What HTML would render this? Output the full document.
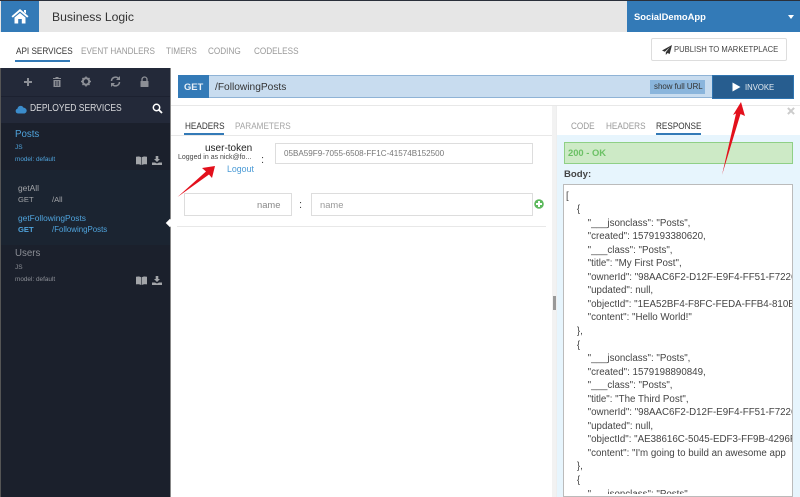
<!DOCTYPE html>
<html><head><meta charset="utf-8"><style>
html,body{margin:0;padding:0;background:#fff}
#r{position:relative;width:800px;height:497px;overflow:hidden;background:#fff;font-family:"Liberation Sans",sans-serif;color:#444}
#r div,#r svg,#r span.a{position:absolute}
.t{white-space:nowrap;line-height:14px}
.n{font-size:9.2px;transform:scaleX(.89);transform-origin:0 0}
.json{font-size:9.75px;color:#444;white-space:pre;line-height:13.55px}
</style></head><body><div id="r">
<div style="left:0;top:0;width:800px;height:1px;background:#2a2f3a"></div>
<div style="left:0;top:1px;width:800px;height:31px;background:#e6e6e6"></div>
<div style="left:1px;top:1px;width:38px;height:31px;background:#337ab7"></div>
<svg style="left:11px;top:8px" width="18" height="16" viewBox="0 0 18 16"><path d="M9 1 L17.5 8.3 L16.2 9.6 L9 3.5 L1.8 9.6 L0.5 8.3 Z M3.5 9.5 L9 5 L14.5 9.500 V15.500 H10.800 V11 H7.200 V15.500 H3.500 Z M13 2 H15 V5.500 L13 4 Z" fill="#fff"/></svg>
<div class="t" style="left:52px;top:10px;font-size:12.2px;color:#333">Business Logic</div>
<div style="left:627px;top:1px;width:173px;height:31px;background:#337ab7"></div>
<div class="t" style="left:634px;top:10px;font-size:9.4px;font-weight:bold;color:#fff">SocialDemoApp</div>
<div style="left:788px;top:15px;border:3.5px solid transparent;border-top:4px solid #fff;border-bottom:0"></div>

<div class="t n" style="left:16px;top:44px;color:#333">API SERVICES</div>
<div style="left:15px;top:60px;width:55px;height:2px;background:#337ab7"></div>
<div class="t n" style="left:81px;top:44px;color:#999">EVENT HANDLERS</div>
<div class="t n" style="left:166px;top:44px;color:#999">TIMERS</div>
<div class="t n" style="left:208px;top:44px;color:#999">CODING</div>
<div class="t n" style="left:254px;top:44px;color:#999">CODELESS</div>
<div style="left:651px;top:38px;width:134px;height:21px;border:1.5px solid #ddd;border-radius:2px;background:#fff"></div>
<svg style="left:662px;top:45px" width="10" height="10" viewBox="0 0 10 10"><path d="M10 0 L0 5.500 L2.800 6.800 L8 2 L3.800 7.300 L3.800 10 L5.500 8 L7.700 9 Z" fill="#333"/></svg>
<div class="t" style="left:674px;top:42px;font-size:8.6px;transform:scaleX(.89);transform-origin:0 0;color:#444">PUBLISH TO MARKETPLACE</div>

<!-- Sidebar -->
<div style="left:0;top:68px;width:1px;height:429px;background:#555"></div>
<div style="left:1px;top:68px;width:169px;height:429px;background:#1b202c"></div>
<div style="left:1px;top:68px;width:169px;height:55px;background:#232939"></div>
<div style="left:1px;top:96px;width:169px;height:1px;background:#1c2130"></div>
<div style="left:170px;top:68px;width:1px;height:429px;background:#888"></div>
<svg style="left:23px;top:77px" width="10" height="10" viewBox="0 0 10 10"><path d="M4 1H6V4H9V6H6V9H4V6H1V4H4Z" fill="#8c8f96"/></svg>
<svg style="left:52px;top:76px" width="10" height="11" viewBox="0 0 10 11"><path d="M1 2H3.500V1H6.500V2H9V3H1ZM1.500 4H8.500V11H1.500Z" fill="#8c8f96"/><path d="M3.500 5V10M5 5V10M6.500 5V10" stroke="#232939" stroke-width=".6"/></svg>
<svg style="left:81px;top:76px" width="10" height="11" viewBox="0 0 10 10"><circle cx="5" cy="5" r="3.200" fill="none" stroke="#8c8f96" stroke-width="2"/><path d="M5 0V10M0 5H10M1.500 1.500L8.500 8.500M8.500 1.500L1.500 8.500" stroke="#8c8f96" stroke-width="1.500" stroke-dasharray="1.700 6.600 1.700 0"/></svg>
<svg style="left:110px;top:76px" width="11" height="11" viewBox="0 0 11 11"><path d="M1.500 5A4 4 0 0 1 8.500 2.500M9.500 6A4 4 0 0 1 2.500 8.500" fill="none" stroke="#8c8f96" stroke-width="1.500"/><path d="M10 0V4H6ZM1 11V7H5Z" fill="#8c8f96"/></svg>
<svg style="left:139px;top:76px" width="11" height="11" viewBox="0 0 11 11"><path d="M3 5V3.500A2.500 2.500 0 0 1 8 3.500V5" fill="none" stroke="#8c8f96" stroke-width="1.300"/><rect x="1.500" y="5" width="8" height="6" rx=".5" fill="#8c8f96"/></svg>
<svg style="left:15px;top:104px" width="12" height="10" viewBox="0 0 12 10"><path d="M3 9.500A2.500 2.500 0 0 1 2.500 4.600 A3.200 3.200 0 0 1 8.600 3.800 A2.900 2.900 0 0 1 9.500 9.500Z" fill="#3b8ccb"/></svg>
<div class="t" style="left:30px;top:102px;font-size:9.8px;transform:scaleX(.87);transform-origin:0 0;color:#d8d9dc">DEPLOYED SERVICES</div>
<svg style="left:152px;top:103px" width="11" height="11" viewBox="0 0 11 11"><circle cx="4.500" cy="4.500" r="3.200" fill="none" stroke="#fff" stroke-width="1.500"/><path d="M7 7L10 10" stroke="#fff" stroke-width="1.800"/></svg>

<div class="t" style="left:15px;top:128px;font-size:9.7px;color:#4fa3dc">Posts</div>
<div class="t" style="left:15px;top:141px;font-size:6.5px;color:#4fa3dc">JS</div>
<div class="t" style="left:15px;top:153px;font-size:6.4px;color:#4fa3dc">model: default</div>
<svg style="left:136px;top:156px" width="11" height="9" viewBox="0 0 11 9"><path d="M0 .8C2 .2 4 .4 5.200 1.300V9C4 8.200 2 8 0 8.400ZM11 .8C9 .2 7 .4 5.800 1.300V9C7 8.200 9 8 11 8.400Z" fill="#a3a5a9"/></svg>
<svg style="left:152px;top:156px" width="10" height="9" viewBox="0 0 10 9"><path d="M3.700 0H6.300V3H8L5 6 2 3H3.700ZM0 6.500H3L5 7.500 7 6.500H10V9H0Z" fill="#a3a5a9"/></svg>
<div style="left:1px;top:170px;width:169px;height:75px;background:#1b2431"></div>
<div class="t" style="left:18px;top:181px;font-size:8.4px;color:#a2a4a8">getAll</div>
<div class="t" style="left:18px;top:193px;font-size:7.6px;color:#a2a4a8">GET</div>
<div class="t" style="left:52px;top:193px;font-size:7.6px;color:#a2a4a8">/All</div>
<div class="t" style="left:18px;top:211px;font-size:8.4px;color:#4fa3dc">getFollowingPosts</div>
<div class="t" style="left:18px;top:223px;font-size:7.6px;font-weight:bold;color:#4fa3dc">GET</div>
<div class="t" style="left:52px;top:223px;font-size:7.9px;color:#4fa3dc">/FollowingPosts</div>
<div style="left:167px;top:220px;width:6px;height:6px;background:#fff;transform:rotate(45deg)"></div>
<div class="t" style="left:15px;top:247px;font-size:9.7px;color:#8c8f96">Users</div>
<div class="t" style="left:15px;top:261px;font-size:6.5px;color:#8c8f96">JS</div>
<div class="t" style="left:15px;top:273px;font-size:6.4px;color:#8c8f96">model: default</div>
<svg style="left:136px;top:276px" width="11" height="9" viewBox="0 0 11 9"><path d="M0 .8C2 .2 4 .4 5.200 1.300V9C4 8.200 2 8 0 8.400ZM11 .8C9 .2 7 .4 5.800 1.300V9C7 8.200 9 8 11 8.400Z" fill="#a3a5a9"/></svg>
<svg style="left:152px;top:276px" width="10" height="9" viewBox="0 0 10 9"><path d="M3.700 0H6.300V3H8L5 6 2 3H3.700ZM0 6.500H3L5 7.500 7 6.500H10V9H0Z" fill="#a3a5a9"/></svg>

<!-- URL bar -->
<div style="left:171px;top:68px;width:629px;height:38px;background:#fff"></div>
<div style="left:178px;top:75px;width:616px;height:23px;background:#c8dcef;box-sizing:border-box;border:1px solid #8fb3d6"></div>
<div style="left:178px;top:75px;width:31px;height:23px;background:#337ab7"></div>
<div class="t" style="left:184px;top:80px;font-size:9.4px;font-weight:bold;color:#e8f0f7">GET</div>
<div class="t" style="left:215px;top:81px;font-size:10.2px;color:#333">/FollowingPosts</div>
<div style="left:650px;top:80px;width:55px;height:14px;background:#8ab5dc"></div>
<div class="t" style="left:654px;top:80px;font-size:7.9px;color:#333">show full URL</div>
<div style="left:712px;top:75px;width:82px;height:24px;background:#275d8f;box-sizing:border-box;border:1px solid #2f74b0"></div>
<svg style="left:732px;top:82px" width="9" height="10" viewBox="0 0 9 10"><path d="M.5 .5L8.500 5 .5 9.500Z" fill="#fff"/></svg>
<div class="t" style="left:745px;top:80px;font-size:8.4px;transform:scaleX(.92);transform-origin:0 0;color:#e6ecf2">INVOKE</div>
<div style="left:171px;top:105px;width:629px;height:1px;background:#e8e8e8"></div>

<!-- Left panel -->
<div class="t n" style="left:185px;top:119px;color:#333">HEADERS</div>
<div style="left:184px;top:133px;width:40px;height:2px;background:#337ab7"></div>
<div class="t n" style="left:235px;top:119px;color:#a5a5a5">PARAMETERS</div>
<div style="left:171px;top:135px;width:385px;height:1px;background:#e8e8e8"></div>
<div class="t" style="left:205px;top:142px;font-size:10px;color:#222">user-token</div>
<div class="t" style="left:178px;top:151px;font-size:7px;color:#444">Logged in as nick@fo...</div>
<div class="t" style="left:227px;top:162px;font-size:8.8px;color:#4b9bd6">Logout</div>
<div class="t" style="left:261px;top:153px;font-size:11px;color:#444">:</div>
<div style="left:275px;top:143px;width:258px;height:21px;box-sizing:border-box;border:1px solid #ddd;background:#fff"></div>
<div class="t" style="left:284px;top:147px;font-size:8.1px;color:#777">05BA59F9-7055-6508-FF1C-41574B152500</div>
<div style="left:184px;top:193px;width:108px;height:23px;box-sizing:border-box;border:1.5px solid #ddd;background:#fff"></div>
<div class="t" style="left:257px;top:198px;font-size:9.4px;color:#888">name</div>
<div class="t" style="left:299px;top:198px;font-size:11px;color:#444">:</div>
<div style="left:311px;top:193px;width:222px;height:23px;box-sizing:border-box;border:1.5px solid #ddd;background:#fff"></div>
<div class="t" style="left:320px;top:198px;font-size:9.4px;color:#999">name</div>
<svg style="left:534px;top:199px" width="10" height="10" viewBox="0 0 10 10"><circle cx="5" cy="5" r="4.800" fill="#5cb85c"/><path d="M4 2H6V4H8V6H6V8H4V6H2V4H4Z" fill="#fff"/></svg>
<div style="left:177px;top:226px;width:369px;height:1px;background:#e8e8e8"></div>
<div style="left:552px;top:106px;width:4px;height:391px;background:#f2f2f2"></div>
<div style="left:553px;top:296px;width:3px;height:14px;background:#999"></div>

<!-- Right panel -->
<div style="left:556px;top:106px;width:244px;height:391px;background:#fff;border-left:1px solid #eee;box-sizing:border-box"></div>
<div class="t n" style="left:571px;top:119px;color:#999">CODE</div>
<div class="t n" style="left:606px;top:119px;color:#999">HEADERS</div>
<div class="t n" style="left:656px;top:119px;color:#333">RESPONSE</div>
<div style="left:656px;top:133px;width:45px;height:2px;background:#337ab7"></div>
<svg style="left:787px;top:107px" width="8" height="8" viewBox="0 0 9 9"><path d="M1 1L8 8M8 1L1 8" stroke="#ccc" stroke-width="2.200"/></svg>
<div style="left:557px;top:135px;width:243px;height:362px;background:#e7f5fd"></div>
<div style="left:564px;top:142px;width:229px;height:22px;box-sizing:border-box;background:#cdeac6;border:1px solid #8fd086"></div>
<div class="t" style="left:568px;top:146px;font-size:9.4px;font-weight:bold;color:#6cc165">200 - OK</div>
<div class="t" style="left:564px;top:168px;font-size:9.6px;font-weight:bold;color:#444">Body:</div>
<div style="left:563px;top:184px;width:230px;height:313px;box-sizing:border-box;border:1px solid #bbb;background:#fff;overflow:hidden"></div>
<div style="left:566px;top:189.5px;width:226px;height:304px;overflow:hidden"><div class="json" style="left:0;top:0">[
    {
        "___jsonclass": "Posts",
        "created": 1579193380620,
        "___class": "Posts",
        "title": "My First Post",
        "ownerId": "98AAC6F2-D12F-E9F4-FF51-F72261",
        "updated": null,
        "objectId": "1EA52BF4-F8FC-FEDA-FFB4-810B0E",
        "content": "Hello World!"
    },
    {
        "___jsonclass": "Posts",
        "created": 1579198890849,
        "___class": "Posts",
        "title": "The Third Post",
        "ownerId": "98AAC6F2-D12F-E9F4-FF51-F72261",
        "updated": null,
        "objectId": "AE38616C-5045-EDF3-FF9B-4296F5",
        "content": "I'm going to build an awesome app
    },
    {
        "___jsonclass": "Posts",</div></div>

<!-- Arrows -->
<svg style="left:0;top:0" width="800" height="497" viewBox="0 0 800 497"><path d="M177.500 197 L206 171.500 L202 168 L215 166 L212 178 L209 174.500 Z" fill="#e3101c"/><path d="M722 175 L736 113.500 L733 115 L741 102 L745 116 L740.500 114 Z" fill="#e3101c"/></svg>
</div></body></html>
